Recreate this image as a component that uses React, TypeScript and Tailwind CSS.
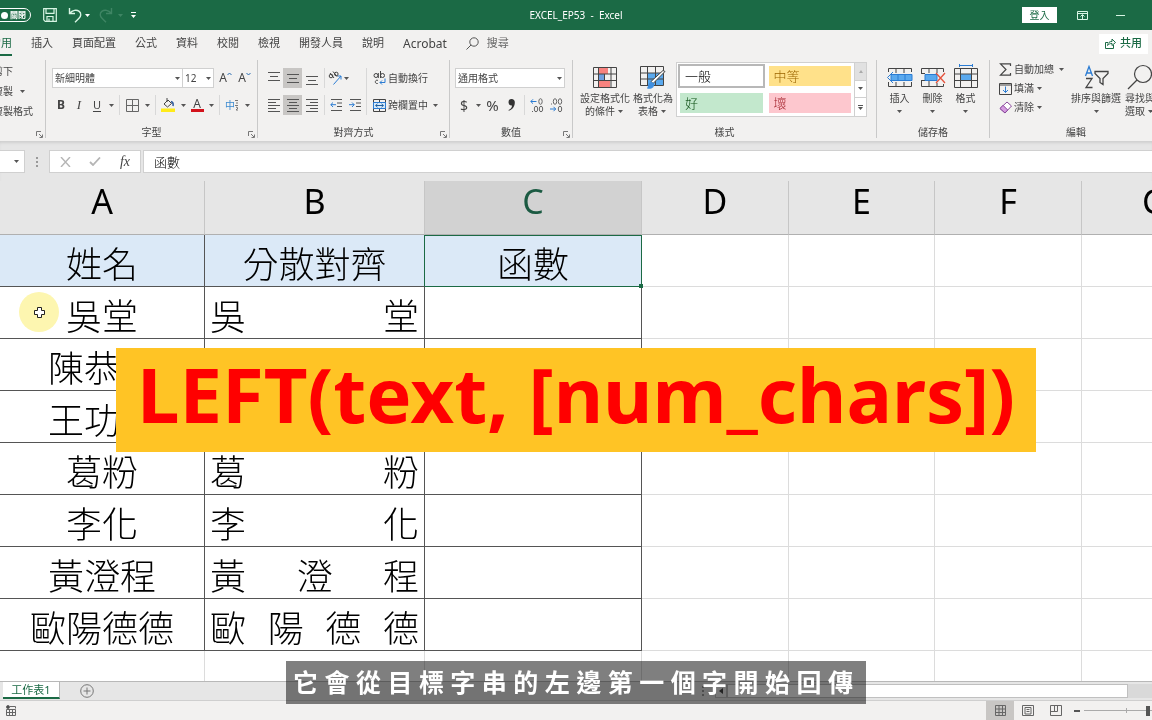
import type { ReactNode } from 'react';
import clsx from 'clsx';

const tabs = ['常用', '插入', '頁面配置', '公式', '資料', '校閱', '檢視', '開發人員', '說明', 'Acrobat'];

const columns = ['A', 'B', 'C', 'D', 'E', 'F', 'G'];

// spread: the same name, distributed over the width of column B
const rows = [
  { name: '吳堂', spread: '吳堂' },
  { name: '陳恭', spread: '', shifted: true },
  { name: '王功', spread: '', shifted: true },
  { name: '葛粉', spread: '葛粉' },
  { name: '李化', spread: '李化' },
  { name: '黃澄程', spread: '黃澄程' },
  { name: '歐陽德德', spread: '歐陽德德' },
];

const subtitle = '它會從目標字串的左邊第一個字開始回傳';

const Caret = ({ className = 'w-[10px]' }: { className?: string }) => (
  <span className={clsx('flex shrink-0 justify-center', className)}>
    <svg width="5" height="3" viewBox="0 0 5 3" aria-hidden="true">
      <path d="M0 0h5L2.5 3z" fill="#555" />
    </svg>
  </span>
);

const Sep = () => (
  <span className="flex h-5 w-[6px] shrink-0 justify-center">
    <span className="w-px bg-[#d8d8d8]" />
  </span>
);

interface ToolProps {
  label: string;
  active?: boolean;
  className?: string;
  children: ReactNode;
}

const Tool = ({ label, active, className = 'w-[19px]', children }: ToolProps) => (
  <button
    type="button"
    aria-label={label}
    className={clsx('flex h-5 shrink-0 items-center justify-center', active && 'bg-[#c8c6c4]', className)}
  >
    {children}
  </button>
);

// Horizontal strokes used by all of the alignment icons: [x1, x2, y]
const Lines = ({ rows }: { rows: number[][] }) => (
  <svg width="14" height="14" viewBox="0 0 14 14" stroke="#555" strokeWidth="1" aria-hidden="true">
    {rows.map(([a, b, y]) => (
      <path key={y} d={`M${a} ${y}.5H${b}`} />
    ))}
  </svg>
);

interface GroupProps {
  title: string;
  launcher?: boolean;
  className: string;
  children: ReactNode;
}

const Group = ({ title, launcher, className, children }: GroupProps) => (
  <section className={clsx('flex h-full flex-col pt-[3px] pb-[2px]', className)}>
    <div className="relative flex grow flex-col">
      <div className="grow">{children}</div>
      <div className="flex h-[14px] items-center justify-center text-[10px] leading-[14px]">{title}</div>
      {launcher && (
        <button type="button" aria-label={`${title}設定`} className="absolute right-[2px] bottom-px">
          <svg width="7" height="7" viewBox="0 0 7 7" fill="none" stroke="#777">
            <path d="M.5 5V.5H5M3 3l3 3M6.500 3.500v3h-3" />
          </svg>
        </button>
      )}
    </div>
  </section>
);

const Divider = () => <span className="my-[3px] w-px shrink-0 bg-[#c9c9c9]" />;

const TitleBar = () => (
  <header className="grid h-[30px] shrink-0 grid-cols-[1fr_auto_1fr] items-center bg-[#1b6a45] text-white">
    <div className="flex items-center">
      <button
        type="button"
        className="-ml-2 flex h-[14px] w-[39px] shrink-0 items-center justify-end gap-[2px] rounded-full border border-white pr-[4px] text-[8px] leading-none font-bold"
      >
        <span className="size-[7px] rounded-full bg-white" />
        關閉
      </button>
      <Tool label="儲存" className="ml-2 w-[22px]">
        <svg width="14" height="14" viewBox="0 0 14 14" fill="none" stroke="#d8f5e4" strokeWidth="1.200">
          <path d="M.7.7h12.600v12.600H2.200L.7 11.800zM3 .7v4.600h8V.7M4 13V8.500h6V13M6 10.500V13" />
        </svg>
      </Tool>
      <Tool label="復原" className="ml-1 w-5">
        <svg width="14" height="15" viewBox="0 0 14 15" fill="none" stroke="#d8f5e4" strokeWidth="1.400">
          <path d="M1.500 0v5.500H7M1.700 5.300C4.500 2 8.500 1.300 11.200 3.400c2.300 2 1.900 5-.2 6.900L7 14.200" />
        </svg>
      </Tool>
      <svg width="5" height="3" viewBox="0 0 5 3">
        <path d="M0 0h5L2.5 3z" fill="#fff" />
      </svg>
      <Tool label="取消復原" className="ml-1 w-6">
        <svg width="14" height="15" viewBox="0 0 14 15" fill="none" stroke="#3f8564" strokeWidth="1.400">
          <path d="M12.500 0v5.500H7M12.300 5.300C9.500 2 5.500 1.300 2.800 3.400.5 5.400.9 8.400 3 10.300L7 14.200" />
        </svg>
      </Tool>
      <svg width="5" height="3" viewBox="0 0 5 3">
        <path d="M0 0h5L2.5 3z" fill="#3f8564" />
      </svg>
      <Tool label="自訂快速存取工具列" className="w-5">
        <svg width="5" height="6" viewBox="0 0 5 6" fill="#fff">
          <path d="M0 0h5v1H0zM0 3h5L2.500 6z" />
        </svg>
      </Tool>
    </div>
    <h1 className="text-[10px] whitespace-pre">EXCEL_EP53  -  Excel</h1>
    <div className="flex items-center justify-end pr-[27px]">
      <button type="button" className="h-4 w-[35px] bg-white text-[10px] leading-4 text-[#1b6a45]">
        登入
      </button>
      <Tool label="功能區顯示選項" className="ml-[19px] w-[12px]">
        <svg width="11" height="9" viewBox="0 0 11 9" fill="none" stroke="#d8f5e4">
          <path d="M.5.5h10v8H.5zM.5 2.500h10M5.500 8V4M3.500 5.500l2-2 2 2" />
        </svg>
      </Tool>
      <Tool label="最小化" className="ml-[28px] w-[9px]">
        <span className="h-px w-[9px] bg-[#d8f5e4]" />
      </Tool>
    </div>
  </header>
);

const TabRow = () => (
  <nav className="flex h-[27px] shrink-0 items-center pr-1 text-[11px]">
    <div className="-ml-[10px] flex h-full shrink-0 items-center gap-[19px]">
      {tabs.map((tab, i) => (
        <a
          key={tab}
          href="#"
          className={clsx(
            'flex h-6 items-center border-b-2 pt-[2px]',
            tab === 'Acrobat' && 'text-[12px]',
            i === 0 ? 'border-[#1b6a45] text-[#1b6a45]' : 'border-transparent',
          )}
        >
          {tab}
        </a>
      ))}
    </div>
    <button type="button" className="ml-[19px] flex items-center gap-2 text-[#666]">
      <svg width="13" height="13" viewBox="0 0 13 13" fill="none" stroke="#555">
        <circle cx="8" cy="5" r="4.200" />
        <path d="M5 8L.5 12.500" />
      </svg>
      搜尋
    </button>
    <button
      type="button"
      className="ml-auto flex h-5 w-[49px] items-center justify-center gap-1 bg-white text-[11px] font-medium text-[#1b6a45]"
    >
      <svg width="11" height="11" viewBox="0 0 11 11" fill="none" stroke="#1b6a45">
        <path d="M3 4.500H.5v6h8V7M2.500 7.500c.5-3 2-4 4.500-4V1l3.500 3.500L7 7.500V5.500c-2 0-3 .5-4.500 2z" />
      </svg>
      共用
    </button>
  </nav>
);

const ClipboardGroup = () => (
  <Group title="" launcher className="w-[45px] shrink-0">
    <div className="-ml-[7px] flex flex-col items-start pt-[1px] text-[10px]">
      <button type="button" className="h-5">剪下</button>
      <button type="button" className="flex h-5 items-center gap-1">
        複製
        <Caret />
      </button>
      <button type="button" className="h-5 whitespace-nowrap">複製格式</button>
    </div>
  </Group>
);

const FontGroup = () => (
  <Group title="字型" launcher className="w-[211px] shrink-0">
    <div className="flex flex-col gap-[7px] pt-[8px] pl-[6px]">
      <div className="flex h-5 items-center">
        <div className="flex h-5 w-[131px] items-center border border-[#d0d0d0] bg-white pl-[2px]">
          <select aria-label="字型名稱" className="grow appearance-none text-[10px] outline-none">
            <option>新細明體</option>
          </select>
          <Caret />
        </div>
        <div className="-ml-px flex h-5 w-8 items-center border border-[#d0d0d0] bg-white pl-[2px]">
          <select aria-label="字型大小" className="w-4 grow appearance-none text-[10px] outline-none">
            <option>12</option>
          </select>
          <Caret />
        </div>
        <Tool label="放大字型" className="ml-[2px] w-[19px]">
          <span className="text-[12px]">A</span>
          <svg width="5" height="12" viewBox="0 0 5 12" fill="none" stroke="#2b6cb0">
            <path d="M.5 3l2-2 2 2" />
          </svg>
        </Tool>
        <Tool label="縮小字型" className="w-[19px]">
          <span className="text-[12px]">A</span>
          <svg width="5" height="12" viewBox="0 0 5 12" fill="none" stroke="#2b6cb0">
            <path d="M.5 1l2 2 2-2" />
          </svg>
        </Tool>
      </div>
      <div className="flex h-5 items-center">
        <Tool label="粗體" className="w-[18px]">
          <b className="text-[12px]">B</b>
        </Tool>
        <Tool label="斜體" className="w-[18px]">
          <i className="font-['Liberation_Serif',serif] text-[13px]">I</i>
        </Tool>
        <Tool label="底線" className="w-[18px]">
          <span className="text-[11px] underline underline-offset-2">U</span>
        </Tool>
        <Caret />
        <Sep />
        <Tool label="框線" className="w-5">
          <svg width="13" height="13" viewBox="0 0 13 13" fill="none" stroke="#666">
            <path d="M.5.5h12v12H.5zM6.500.5v12M.5 6.500h12" />
          </svg>
        </Tool>
        <Caret />
        <Sep />
        <Tool label="填滿色彩" className="w-5">
          <svg width="14" height="14" viewBox="0 0 14 14" fill="none">
            <path d="M0 10.500h14V14H0z" fill="#ffeb1a" />
            <path d="M3 6l4-4 3.500 3.500L6.500 9zM6 0v4" stroke="#444" />
            <path d="M10 3.500c2 .5 2.500 2 2 4.500" stroke="#2b579a" strokeWidth="1.500" />
          </svg>
        </Tool>
        <Caret />
        <Tool label="字型色彩" className="w-[18px]">
          <span className="flex flex-col items-center">
            <span className="text-[12px] leading-[10px]">A</span>
            <span className="h-[3px] w-[13px] bg-[#d3121b]" />
          </span>
        </Tool>
        <Caret />
        <Sep />
        <Tool label="注音標示" className="w-5">
          <span className="text-[10px] text-[#3b8ad0]">中</span>
          <svg width="4" height="12" viewBox="0 0 4 12" fill="none" stroke="#777">
            <path d="M0 1.500h3M2 3v2M0 6.500h3M1 8l2 1-2 2h2" />
          </svg>
        </Tool>
        <Caret />
      </div>
    </div>
  </Group>
);

const AlignGroup = () => (
  <Group title="對齊方式" launcher className="w-[191px] shrink-0">
    <div className="flex pt-[8px] pl-[6px]">
      <div className="flex w-[102px] flex-col gap-[7px]">
        <div className="flex">
          <Tool label="靠上對齊"><Lines rows={[[1, 13, 1], [3, 11, 5], [1, 13, 9]]} /></Tool>
          <Tool label="置中對齊" active><Lines rows={[[1, 13, 3], [3, 11, 7], [1, 13, 11]]} /></Tool>
          <Tool label="靠下對齊"><Lines rows={[[1, 13, 5], [3, 11, 9], [1, 13, 13]]} /></Tool>
          <Sep />
          <Tool label="方向" className="w-4">
            <svg width="15" height="14" viewBox="0 0 15 14" fill="none" stroke="#444">
              <path d="M5.500 13.500L13 5M9.500 5H13v3.500" stroke="#2b7cd3" />
              <circle cx="3" cy="5" r="1.800" />
              <path d="M2 2l4 5M5 .5l4 5" />
              <circle cx="8.300" cy="3" r="1.800" />
            </svg>
          </Tool>
          <span className="flex items-center"><Caret className="w-[6px]" /></span>
        </div>
        <div className="flex">
          <Tool label="靠左"><Lines rows={[[1, 13, 1], [1, 9, 4], [1, 13, 7], [1, 9, 10], [1, 13, 13]]} /></Tool>
          <Tool label="水平置中" active><Lines rows={[[1, 13, 1], [3, 11, 4], [1, 13, 7], [3, 11, 10], [1, 13, 13]]} /></Tool>
          <Tool label="靠右"><Lines rows={[[1, 13, 1], [5, 13, 4], [1, 13, 7], [5, 13, 10], [1, 13, 13]]} /></Tool>
          <Sep />
          <Tool label="減少縮排">
            <svg width="13" height="12" viewBox="0 0 13 12" fill="none" stroke="#555">
              <path d="M1 .5h11M7 4h5M7 7.500h5M1 11.500h11" />
              <path d="M6 5.700H.8M3 3.500L.8 5.700 3 8" stroke="#2b7cd3" />
            </svg>
          </Tool>
          <Tool label="增加縮排">
            <svg width="13" height="12" viewBox="0 0 13 12" fill="none" stroke="#555">
              <path d="M1 .5h11M7 4h5M7 7.500h5M1 11.500h11" />
              <path d="M0 5.700h5.200M3 3.500l2.200 2.200L3 8" stroke="#2b7cd3" />
            </svg>
          </Tool>
        </div>
      </div>
      <span className="w-px bg-[#d8d8d8]" />
      <div className="flex flex-col gap-[7px] pl-[6px] text-[10px]">
        <button type="button" className="flex h-5 items-center gap-[2px]">
          <svg width="13" height="14" viewBox="0 0 13 14" fill="none" stroke="#444">
            <circle cx="3" cy="4.500" r="2" />
            <path d="M5.300 2v5M7.500 0v7M5 9.500c-3-1.500-4 3.500-.3 3" />
            <circle cx="9.500" cy="4.500" r="2" />
            <path d="M12 7.500v4H7M9 9.500l-2 2 2 2" stroke="#2b7cd3" />
          </svg>
          自動換行
        </button>
        <button type="button" className="flex h-5 items-center gap-[2px]">
          <svg width="13" height="13" viewBox="0 0 13 13" fill="none" stroke="#444">
            <path d="M.5.5h12v12H.5zM6.500.5v3M6.500 9.500v3" />
            <path d="M.5 3.500h12v6H.5z" fill="#d7eafa" stroke="#2b7cd3" />
            <path d="M2.500 6.500h8M4.500 4.800L2.700 6.500l1.800 1.700M8.500 4.800l1.800 1.700-1.800 1.700" stroke="#1f5f9f" />
          </svg>
          跨欄置中
          <Caret />
        </button>
      </div>
    </div>
  </Group>
);

const NumberGroup = () => (
  <Group title="數值" launcher className="w-[122px] shrink-0">
    <div className="flex flex-col gap-[7px] pt-[8px] pl-[5px]">
      <div className="flex h-5 w-[110px] items-center border border-[#d0d0d0] bg-white pl-[2px]">
        <select aria-label="數值格式" className="grow appearance-none text-[10px] outline-none">
          <option>通用格式</option>
        </select>
        <Caret />
      </div>
      <div className="flex items-center">
        <Tool label="會計數字格式" className="w-[18px]"><span className="text-[14px]">$</span></Tool>
        <Caret />
        <Tool label="百分比樣式"><span className="text-[15px]">%</span></Tool>
        <Tool label="千分位樣式">
          <svg width="7" height="12" viewBox="0 0 7 12" fill="#333">
            <path d="M3.500 0a3.200 3.200 0 013.300 3.500C6.800 7.500 4.500 10.500.8 11.800l-.3-.8C2.700 10 4 8.500 4 6.400A3.200 3.200 0 113.500 0z" />
          </svg>
        </Tool>
        <Sep />
        <Tool label="增加小數位數">
          <svg width="14" height="15" viewBox="0 0 14 15" fill="none" stroke="#666">
            <path d="M6.500 3.500H.8M3 1.300L.8 3.500 3 5.700" stroke="#2b7cd3" />
            <ellipse cx="10.500" cy="3.500" rx="1.700" ry="2.800" />
            <ellipse cx="6" cy="11" rx="1.700" ry="2.800" />
            <ellipse cx="11" cy="11" rx="1.700" ry="2.800" />
            <path d="M2 13.500h1" />
          </svg>
        </Tool>
        <Tool label="減少小數位數">
          <svg width="14" height="15" viewBox="0 0 14 15" fill="none" stroke="#666">
            <path d="M1 11h5.700M4.500 8.800L6.700 11l-2.200 2.200" stroke="#2b7cd3" />
            <ellipse cx="11" cy="11" rx="1.700" ry="2.800" />
            <ellipse cx="6" cy="3.500" rx="1.700" ry="2.800" />
            <ellipse cx="11" cy="3.500" rx="1.700" ry="2.800" />
            <path d="M2 6h1" />
          </svg>
        </Tool>
      </div>
    </div>
  </Group>
);

// Big ribbon button: icon on top, one or two lines of text under it
const BigButton = ({ icon, line1, line2, className }: { icon: ReactNode; line1: string; line2?: string; className: string }) => (
  <button type="button" className={clsx('flex shrink-0 flex-col items-center text-[10px] leading-[13px] whitespace-nowrap', className)}>
    <span className="flex h-[30px] items-center">{icon}</span>
    <span>{line1}</span>
    <span className="flex h-[13px] items-center">
      {line2}
      <Caret />
    </span>
  </button>
);

const styleCells = [
  { name: '一般', look: 'bg-white text-black outline-2 outline-[#b8b8b8]' },
  { name: '中等', look: 'bg-[#ffe18a] text-[#9c6500]' },
  { name: '好', look: 'bg-[#c3e8cd] text-[#0b4d12]' },
  { name: '壞', look: 'bg-[#fdc7ce] text-[#a4222c]' },
];

const StylesGroup = () => (
  <Group title="樣式" className="w-[303px] shrink-0">
    <div className="flex pt-[2px] pl-[6px]">
      <BigButton
        className="w-[52px]"
        line1="設定格式化"
        line2="的條件"
        icon={
          <svg width="24" height="21" viewBox="0 0 24 21" fill="none">
            <path d="M5 1h10v6H5zM5 13h12v7H5z" fill="#f8837f" />
            <path d="M5 7h6v6H5z" fill="#6f9fe0" />
            <path d="M.5.5h23v20H.5zM.5 7h23M.5 13.500h23M5.500.5v20M11.500 7v6M18 .5v20" stroke="#444" />
          </svg>
        }
      />
      <BigButton
        className="ml-px w-[42px]"
        line1="格式化為"
        line2="表格"
        icon={
          <svg width="26" height="25" viewBox="0 0 26 25" fill="none">
            <path d="M7 8h16v13H7z" fill="#5aa9ee" />
            <path d="M.5 1.500h23v19H.5zM.5 8h23M.5 14h23M7.500 1.500v19M15.500 1.500v19" stroke="#444" />
            <path d="M25 6.500l-12 12-2-2 12-11z" fill="#fff" stroke="#444" />
            <path d="M12 17c-3-.5-3.500 3-5 6.500 4 1 7.500-.5 7-4.500z" fill="#3f8fe0" />
          </svg>
        }
      />
      <div className="ml-[2px] flex h-[55px] border border-[#d0d0d0] bg-white">
        <div className="grid w-[177px] grid-cols-2 gap-x-[6px] gap-y-[6px] p-[3px]">
          {styleCells.map(cell => (
            <button key={cell.name} type="button" className={clsx('h-5 pl-[5px] text-left text-[13px] leading-5 font-light', cell.look)}>
              {cell.name}
            </button>
          ))}
        </div>
        <div className="grid w-3 grid-rows-3 divide-y divide-[#d0d0d0] border-l border-[#d0d0d0]">
          <button type="button" aria-label="上一列" className="flex items-center justify-center bg-[#e1e1e1]">
            <svg width="4" height="3" viewBox="0 0 4 3"><path d="M0 3h4L2 0z" fill="#aaa" /></svg>
          </button>
          <button type="button" aria-label="下一列" className="flex items-center justify-center"><Caret /></button>
          <button type="button" aria-label="更多樣式" className="flex flex-col items-center justify-center gap-px">
            <span className="h-px w-[5px] bg-[#555]" />
            <Caret />
          </button>
        </div>
      </div>
    </div>
  </Group>
);

const CellsGroup = () => (
  <Group title="儲存格" className="w-[112px] shrink-0">
    <div className="flex pt-[2px] pl-[6px]">
      <BigButton
        className="w-[33px]"
        line1="插入"
        icon={
          <svg width="27" height="21" viewBox="0 0 27 21" fill="none">
            <path d="M2.500 5V1.500h23V5M2.500 15v4.500h23V15M10 1.500V6M18 1.500V6M10 15v4.500M18 15v4.500" stroke="#444" />
            <path d="M5 7.500h21v6H5z" fill="#5aa9ee" stroke="#2b7cd3" />
            <path d="M7 5L1.500 10.500 7 16M12 7.500v6M19 7.500v6" stroke="#2b7cd3" />
          </svg>
        }
      />
      <BigButton
        className="w-[33px]"
        line1="刪除"
        icon={
          <svg width="26" height="21" viewBox="0 0 26 21" fill="none">
            <path d="M1.500 6V1.500h22V5M1.500 14v5.500h22V17M9 1.500V6M17 1.500V6M9 14v5.500M17 16v3.500M1 6.500h4M1 13.500h4" stroke="#444" />
            <path d="M5 7.500h12v6H5z" fill="#5aa9ee" stroke="#2b7cd3" />
            <path d="M16 6l9 10M25 6l-9 10" stroke="#e5533d" strokeWidth="1.300" />
          </svg>
        }
      />
      <BigButton
        className="w-[33px]"
        line1="格式"
        icon={
          <svg width="24" height="27" viewBox="0 0 24 27" fill="none">
            <path d="M6.500 10h11v6h-11z" fill="#5aa9ee" />
            <path d="M.5 4.500h23v19H.5zM.5 10h23M.5 16.500h23M6.500 4.500v19M17.500 4.500v19" stroke="#444" />
            <path d="M5.500 1.500h13M5.500 0v3M18.500 0v3" stroke="#2b7cd3" />
          </svg>
        }
      />
    </div>
  </Group>
);

const EditGroup = () => (
  <Group title="編輯" className="w-[172px] shrink-0">
    <div className="flex pl-[9px]">
      <div className="flex w-[71px] flex-col text-[10px]">
        <button type="button" className="flex h-[19px] items-center gap-[2px] whitespace-nowrap">
          <svg width="13" height="13" viewBox="0 0 13 13" fill="none" stroke="#444" strokeWidth="1.200">
            <path d="M11.500 3V.8H1.500L7 6.500l-5.500 5.700h10V10" />
          </svg>
          自動加總
          <Caret />
        </button>
        <button type="button" className="flex h-[19px] items-center gap-[2px]">
          <svg width="13" height="13" viewBox="0 0 13 13" fill="none" stroke="#444">
            <path d="M.5 1.500h12v11H.5zM.5 3h12" />
            <path d="M6.500 4.500v6M4 8l2.500 2.500L9 8" stroke="#2b7cd3" />
          </svg>
          填滿
          <Caret className="w-[6px]" />
        </button>
        <button type="button" className="flex h-[19px] items-center gap-[2px]">
          <svg width="13" height="13" viewBox="0 0 13 13" fill="none" stroke="#8a4a9c">
            <path d="M8 1l4.500 4L6 12 1 7.500z" fill="#fff" />
            <path d="M1 7.500l3-3.200L8.700 9 6 12z" fill="#d59be0" />
          </svg>
          清除
          <Caret className="w-[6px]" />
        </button>
      </div>
      <div className="flex pt-[2px]">
        <BigButton
          className="w-[52px]"
          line1="排序與篩選"
          icon={
            <svg width="25" height="24" viewBox="0 0 25 24" fill="none" strokeWidth="1.300">
              <path d="M1.500 11L5 1.500 8.500 11M2.700 8h4.600" stroke="#2b7cd3" />
              <path d="M2 13.500h6L2 22.500h6.500M11 6.500h13v2l-5 5v6l-3-2v-4l-5-5z" stroke="#444" />
            </svg>
          }
        />
        <BigButton
          className="w-[36px]"
          line1="尋找與"
          line2="選取"
          icon={
            <svg width="26" height="26" viewBox="0 0 26 26" fill="none" stroke="#444" strokeWidth="1.200">
              <circle cx="16" cy="10" r="8.500" />
              <path d="M10 16l-9 9" />
            </svg>
          }
        />
      </div>
    </div>
  </Group>
);

const FormulaBar = () => (
  <div className="flex h-10 shrink-0 items-center bg-[#e6e6e6] pt-[1px] shadow-[inset_0_3px_3px_-1px_#cfcfcf]">
    <div className="flex h-[23px] w-[25px] shrink-0 items-center justify-end border border-l-0 border-[#d0d0d0] bg-white pr-[3px]">
      <Caret />
    </div>
    <svg className="mx-[11px] shrink-0" width="2" height="10" viewBox="0 0 2 10" fill="#999">
      <path d="M0 0h2v2H0zM0 4h2v2H0zM0 8h2v2H0z" />
    </svg>
    <div className="flex h-[23px] w-[92px] shrink-0 items-center justify-around border border-[#d0d0d0] bg-white">
      <Tool label="取消">
        <svg width="11" height="10" viewBox="0 0 11 10" stroke="#b5b5b5" strokeWidth="1.400"><path d="M1 0l9 10M10 0L1 10" /></svg>
      </Tool>
      <Tool label="輸入">
        <svg width="12" height="9" viewBox="0 0 12 9" fill="none" stroke="#b5b5b5" strokeWidth="1.800"><path d="M1 5l3 3 7-7.500" /></svg>
      </Tool>
      <Tool label="插入函數">
        <i className="font-['Liberation_Serif',serif] text-[14px] text-[#444]">fx</i>
      </Tool>
    </div>
    <input
      aria-label="資料編輯列"
      defaultValue="函數"
      className="ml-[2px] h-[23px] min-w-0 grow border border-r-0 border-[#d0d0d0] bg-white pl-[10px] text-[13px] font-light text-black outline-none"
    />
  </div>
);

const Sheet = () => (
  <main className="relative min-h-0 grow overflow-hidden bg-white">
    <table className="w-[1228px] table-fixed border-separate border-spacing-0 text-black">
      <colgroup>
        <col className="w-[205px]" />
        <col className="w-[220px]" />
        <col className="w-[217px]" />
        <col className="w-[147px]" />
        <col className="w-[146px]" />
        <col className="w-[147px]" />
        <col />
      </colgroup>
      <thead>
        <tr className="h-[54px]">
          {columns.map(col => (
            <th
              key={col}
              className={clsx(
                'border-r border-b border-r-[#c6c6c6] border-b-[#b0b0b0] pb-[13px] text-[34px] leading-[40px] font-normal',
                col === 'C' ? 'bg-[#d2d2d2] text-[#1b5a42]' : 'bg-[#e6e6e6]',
              )}
            >
              {col}
            </th>
          ))}
        </tr>
      </thead>
      <tbody className="text-[36px] leading-[40px] font-light">
        <tr className="h-[52px] text-center">
          <td className="border-r border-b border-[#555] bg-[#dbe9f7] pt-2">姓名</td>
          <td className="border-r border-b border-r-[#1b6a45] border-b-[#555] bg-[#dbe9f7] pt-2">分散對齊</td>
          <td className="relative border-r border-b border-[#1b6a45] bg-[#dbe9f7] pt-2 shadow-[inset_0_1px_#1b6a45]">
            函數
            <span className="absolute -right-[2px] -bottom-[2px] size-[4px] bg-[#1b6a45]" />
          </td>
          {columns.slice(3).map(col => (
            <td key={col} className="border-r border-b border-[#dcdcdc]" />
          ))}
        </tr>
        {rows.map(({ name, spread, shifted }) => (
          <tr key={name} className="h-[52px]">
            <td className={clsx('border-r border-b border-[#555] pt-2 text-center', shifted && 'pr-9')}>{name}</td>
            <td className="border-r border-b border-[#555] px-[5px] pt-2">
              <div className="flex justify-between">
                {[...spread].map((ch, k) => (
                  <span key={k}>{ch}</span>
                ))}
              </div>
            </td>
            <td className="border-r border-b border-[#555]" />
            {columns.slice(3).map(col => (
              <td key={col} className="border-r border-b border-[#dcdcdc]" />
            ))}
          </tr>
        ))}
        <tr className="h-[52px]">
          {columns.map(col => (
            <td key={col} className="border-r border-[#dcdcdc]" />
          ))}
        </tr>
      </tbody>
    </table>
    {/* mouse pointer with its highlight */}
    <div className="absolute top-[111px] left-[19px] flex size-10 items-center justify-center rounded-full bg-[#fdf6b0] mix-blend-multiply">
      <svg width="11" height="11" viewBox="0 0 11 11" fill="#fff" stroke="#222">
        <path d="M3.500.500h4v3h3v4h-3v3h-4v-3h-3v-4h3z" />
      </svg>
    </div>
  </main>
);

const SheetTabs = () => (
  <div className="flex h-5 shrink-0 border-t border-b border-t-[#b8b8b8] border-b-[#cfcfcf] bg-[#e6e6e6]">
    <button type="button" className="ml-[3px] h-[17px] w-[57px] border-r border-b-2 border-r-[#b8b8b8] border-b-[#1b6a45] bg-white text-[11px] leading-[13px] text-[#1b6a45]">
      工作表1
    </button>
    <button type="button" aria-label="新增工作表" className="ml-5 flex items-center">
      <svg width="14" height="14" viewBox="0 0 14 14" fill="none" stroke="#777">
        <circle cx="7" cy="7" r="6.300" />
        <path d="M3.500 7h7M7 3.500v7" />
      </svg>
    </button>
    <div className="my-[2px] ml-auto flex w-[450px] items-center gap-[11px]">
      <svg width="2" height="10" viewBox="0 0 2 10" fill="#999">
        <path d="M0 0h2v2H0zM0 4h2v2H0zM0 8h2v2H0z" />
      </svg>
      <div className="flex h-full grow bg-[#d9d9d9]">
        <button type="button" aria-label="向左捲動" className="flex w-3 items-center justify-center border border-[#c0c0c0] bg-[#f0f0f0]">
          <svg width="4" height="6" viewBox="0 0 4 6"><path d="M4 0v6L0 3z" fill="#444" /></svg>
        </button>
        <span className="mr-6 grow border border-[#c0c0c0] bg-white" />
      </div>
    </div>
  </div>
);

const StatusBar = () => (
  <footer className="flex h-[19px] shrink-0 items-center">
    <Tool label="錄製巨集" className="ml-[1px] w-5">
      <svg width="10" height="11" viewBox="0 0 10 11" fill="none" stroke="#666">
        <path d="M.5 4.500h9v6h-9zM3.500 4.500v6M6.500 4.500v6M.5 7.500h9M4 1.500h5.500v2" />
        <circle cx="2" cy="2" r="1.500" fill="#444" />
      </svg>
    </Tool>
    <div className="ml-auto flex items-center">
      <Tool label="標準模式" active className="w-7">
        <svg width="11" height="11" viewBox="0 0 11 11" fill="none" stroke="#666">
          <path d="M.5.500h10v10H.5zM4 .5v10M7.500.5v10M.5 4h10M.5 7.500h10" />
        </svg>
      </Tool>
      <Tool label="整頁模式" className="w-7">
        <svg width="12" height="11" viewBox="0 0 12 11" fill="none" stroke="#666">
          <path d="M.5.500h11v10H.5zM3 2.500h6v6.500H3zM4.500 4.500h3M4.500 6.500h3" />
        </svg>
      </Tool>
      <Tool label="分頁預覽" className="w-7">
        <svg width="12" height="11" viewBox="0 0 12 11" fill="none" stroke="#666">
          <path d="M.5.500h11v10H.5zM4.500.5v6M7.500.5v6M.5 6.500h7" />
        </svg>
      </Tool>
      <Tool label="縮小" className="w-[14px]">
        <span className="h-[2px] w-[6px] bg-[#555]" />
      </Tool>
      <div className="relative -mr-4 flex items-center">
        <input
          type="range"
          aria-label="縮放"
          defaultValue={78}
          className="h-px w-[84px] appearance-none bg-[#aaa] [&::-webkit-slider-thumb]:h-[10px] [&::-webkit-slider-thumb]:w-[4px] [&::-webkit-slider-thumb]:appearance-none [&::-webkit-slider-thumb]:bg-[#555]"
        />
        <span className="absolute left-1/2 h-[5px] w-px bg-[#aaa]" />
      </div>
    </div>
  </footer>
);

const App = () => (
  <div className="relative flex h-screen w-full flex-col overflow-hidden bg-[#f2f1f0] font-['Noto_Sans','Noto_Sans_CJK_TC',sans-serif] text-[#444]">
    <TitleBar />
    <TabRow />
    <div className="flex h-[84px] shrink-0">
      <ClipboardGroup />
      <Divider />
      <FontGroup />
      <Divider />
      <AlignGroup />
      <Divider />
      <NumberGroup />
      <Divider />
      <StylesGroup />
      <Divider />
      <CellsGroup />
      <Divider />
      <EditGroup />
    </div>
    <FormulaBar />
    <Sheet />
    <SheetTabs />
    <StatusBar />

    {/* video captions */}
    <div className="absolute top-[348px] left-1/2 flex h-[104px] w-[920px] -translate-x-1/2 justify-center bg-[#ffc425] text-[76px] leading-[92px] font-bold whitespace-nowrap text-[#ff0000]">
      LEFT(text, [num_chars])
    </div>
    <p className="absolute bottom-4 left-1/2 flex h-[43px] w-[580px] -translate-x-1/2 items-center justify-between bg-black/50 pr-[13px] pl-[7px] text-[25px] font-bold text-white">
      {[...subtitle].map((ch, i) => (
        <span key={i}>{ch}</span>
      ))}
    </p>
  </div>
);

export default App;
